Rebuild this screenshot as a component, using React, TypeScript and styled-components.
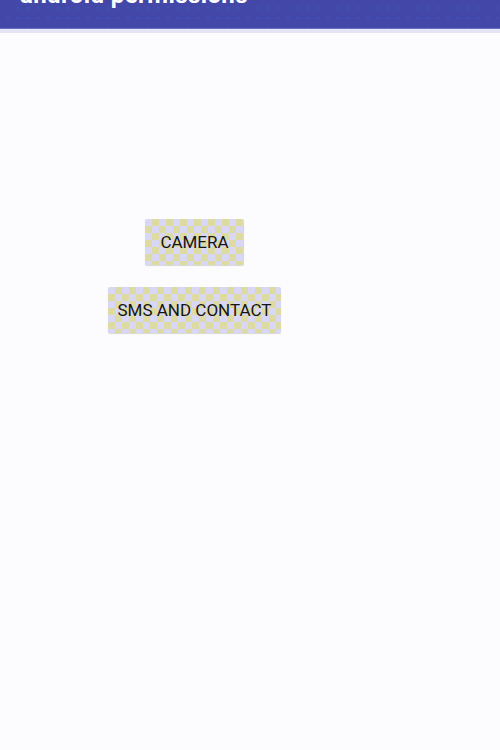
import styled, { createGlobalStyle } from 'styled-components';

const GlobalStyle = createGlobalStyle`
  html, body {
    margin: 0;
    padding: 0;
    background: #fcfcff;
    font-family: Roboto, "Liberation Sans", sans-serif;
  }
`;

const Page = styled.div`
  width: 500px;
  height: 750px;
  display: flex;
  flex-direction: column;
  overflow: hidden;
  background: #fcfcff;
`;

const AppBar = styled.header`
  height: 28px;
  background-color: #4347a8;
  background-image: radial-gradient(#3a55c0 0.8px, transparent 1px);
  background-size: 10px 10px;
  background-position: 3px 3px;
  display: flex;
  align-items: flex-end;
  padding-left: 20px;
  overflow: hidden;
  border-bottom: 1px solid #6a6ec0;
`;

const Title = styled.h1`
  margin: 0 0 21px;
  font-size: 24px;
  font-weight: 700;
  color: #ffffff;
  line-height: 1;
  letter-spacing: 0.4px;
`;

const Shadow = styled.div`
  height: 4px;
  background-color: #e4e4f6;
  background-image: radial-gradient(#d8dca0 1px, transparent 1.2px);
  background-size: 10px 4px;
`;

const Content = styled.main`
  display: flex;
  flex-direction: column;
  align-items: center;
  gap: 22px;
  padding-top: 186px;
  width: 389px;
`;

const Button = styled.button`
  height: 46px;
  padding: 0 10px;
  border: none;
  border-radius: 2px;
  font-family: Roboto, "Liberation Sans", sans-serif;
  font-size: 17px;
  font-weight: 400;
  color: #151515;
  background-color: #d8d8f6;
  background-image:
    linear-gradient(45deg, #dedba2 25%, transparent 25%, transparent 75%, #dedba2 75%),
    linear-gradient(45deg, #dedba2 25%, transparent 25%, transparent 75%, #dedba2 75%);
  background-size: 14px 14px;
  background-position: 0 0, 7px 7px;
  box-shadow: 0 1px 1px rgba(0, 0, 0, 0.15);
`;

const CameraButton = styled(Button)`
  width: 99px;
`;

const App = () => (
  <Page>
    <GlobalStyle />
    <AppBar>
      <Title>android permissions</Title>
    </AppBar>
    <Shadow />
    <Content>
      <CameraButton>CAMERA</CameraButton>
      <Button>SMS AND CONTACT</Button>
    </Content>
  </Page>
);

export default App;
